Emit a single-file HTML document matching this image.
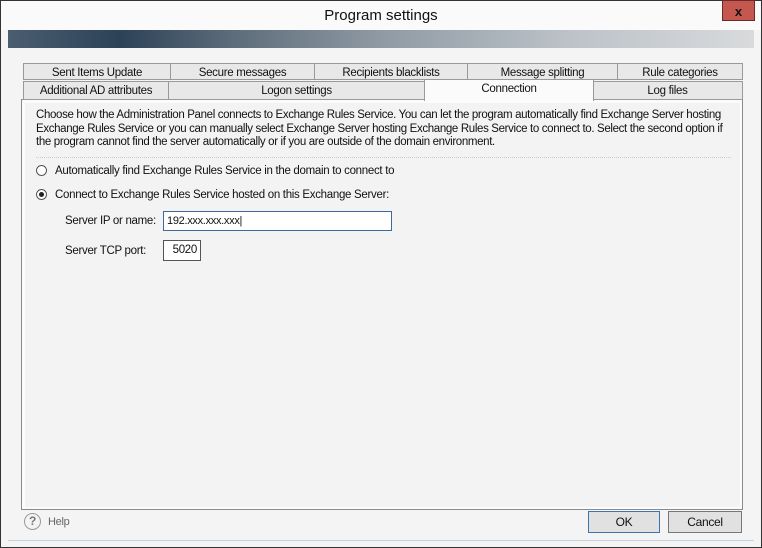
<html><head><style>
body{margin:0;width:762px;height:548px;overflow:hidden;background:#f4f4f4;font-family:"Liberation Sans",sans-serif;font-size:11.5px;color:#111;position:relative;letter-spacing:-0.3px}
.a{position:absolute}
.win{left:0;top:0;width:760px;height:546px;border:1px solid #333;background:#f4f4f4}
.tab{position:absolute;height:17px;border:1px solid #999;background:#e8e8e8;text-align:center;line-height:17px;box-sizing:border-box}
.rad{width:11px;height:11px;border:1px solid #555;border-radius:50%;background:#fff;box-sizing:border-box}
.btn{height:22px;border:1px solid #777;background:#e1e1e1;text-align:center;line-height:20px;box-sizing:border-box;font-size:12px}
</style></head><body>
<div class="a win"></div>
<div class="a" style="left:1px;top:1px;width:760px;height:29px;background:#fafafa"></div>
<div class="a" style="left:0;top:7px;width:762px;text-align:center;font-size:15px;letter-spacing:0">Program settings</div>
<div class="a" style="left:722px;top:0;width:33px;height:21px;background:#c4574e;border:1px solid #6a2a28;box-sizing:border-box;text-align:center;font-weight:bold;font-size:13px;line-height:21px;letter-spacing:0">x</div>
<div class="a" style="left:8px;top:30px;width:746px;height:18px;background:linear-gradient(90deg,#4a5e70 0%,#2c4257 15%,#5d6c7a 30%,#8f9aa4 50%,#bcc2c8 75%,#d8dadc 100%)"></div>
<div class="a" style="left:21px;top:99px;width:722px;height:411px;border:1px solid #8a8a8a;background:#fbfbfb;box-sizing:border-box"></div>
<div class="a" style="left:25px;top:103px;width:715px;height:404px;background:#f3f3f3"></div>
<div class="tab" style="left:23px;top:63px;width:148px;line-height:18px">Sent Items Update</div>
<div class="tab" style="left:170px;top:63px;width:145px;line-height:18px">Secure messages</div>
<div class="tab" style="left:314px;top:63px;width:154px;line-height:18px">Recipients blacklists</div>
<div class="tab" style="left:467px;top:63px;width:151px;line-height:18px">Message splitting</div>
<div class="tab" style="left:617px;top:63px;width:126px;line-height:18px">Rule categories</div>
<div class="tab" style="left:23px;top:81px;width:146px;height:19px;line-height:19px">Additional AD attributes</div>
<div class="tab" style="left:168px;top:81px;width:257px;height:19px;line-height:19px">Logon settings</div>
<div class="tab" style="left:592px;top:81px;width:151px;height:19px;line-height:19px">Log files</div>
<div class="tab" style="left:424px;top:79px;width:170px;height:22px;background:#fbfbfb;border-bottom:none;line-height:18px">Connection</div>
<div class="a" style="left:36px;top:109px;white-space:nowrap;line-height:13.5px;letter-spacing:-0.35px">Choose how the Administration Panel connects to Exchange Rules Service. You can let the program automatically find Exchange Server hosting<br>Exchange Rules Service or you can manually select Exchange Server hosting Exchange Rules Service to connect to. Select the second option if<br>the program cannot find the server automatically or if you are outside of the domain environment.</div>
<div class="a" style="left:36px;top:157px;width:695px;border-top:1px dotted #ccc"></div>
<div class="a rad" style="left:36px;top:165px"></div>
<div class="a" style="left:55px;top:165px">Automatically find Exchange Rules Service in the domain to connect to</div>
<div class="a rad" style="left:36px;top:189px"><div style="width:5px;height:5px;border-radius:50%;background:#222;margin:2px"></div></div>
<div class="a" style="left:55px;top:189px">Connect to Exchange Rules Service hosted on this Exchange Server:</div>
<div class="a" style="left:65px;top:215px">Server IP or name:</div>
<div class="a" style="left:163px;top:211px;width:229px;height:20px;border:1px solid #3c6a9c;background:#fff;box-sizing:border-box;padding:3px 3px;font-size:11px">192.xxx.xxx.xxx|</div>
<div class="a" style="left:65px;top:245px">Server TCP port:</div>
<div class="a" style="left:163px;top:240px;width:38px;height:21px;border:1px solid #555;background:#fff;box-sizing:border-box;padding:3px 3px;text-align:right">5020</div>
<div class="a" style="left:24px;top:513px;width:17px;height:17px;border:1.5px solid #999;border-radius:50%;box-sizing:border-box;text-align:center;font-size:12px;line-height:14px;color:#777;font-weight:bold">?</div>
<div class="a" style="left:48px;top:516px;color:#666;font-size:11px">Help</div>
<div class="a btn" style="left:588px;top:511px;width:72px;border-color:#3c74b0">OK</div>
<div class="a btn" style="left:668px;top:511px;width:74px">Cancel</div>
<div class="a" style="left:8px;top:540px;width:746px;height:1px;background:#c4d0de"></div>
</body></html>
